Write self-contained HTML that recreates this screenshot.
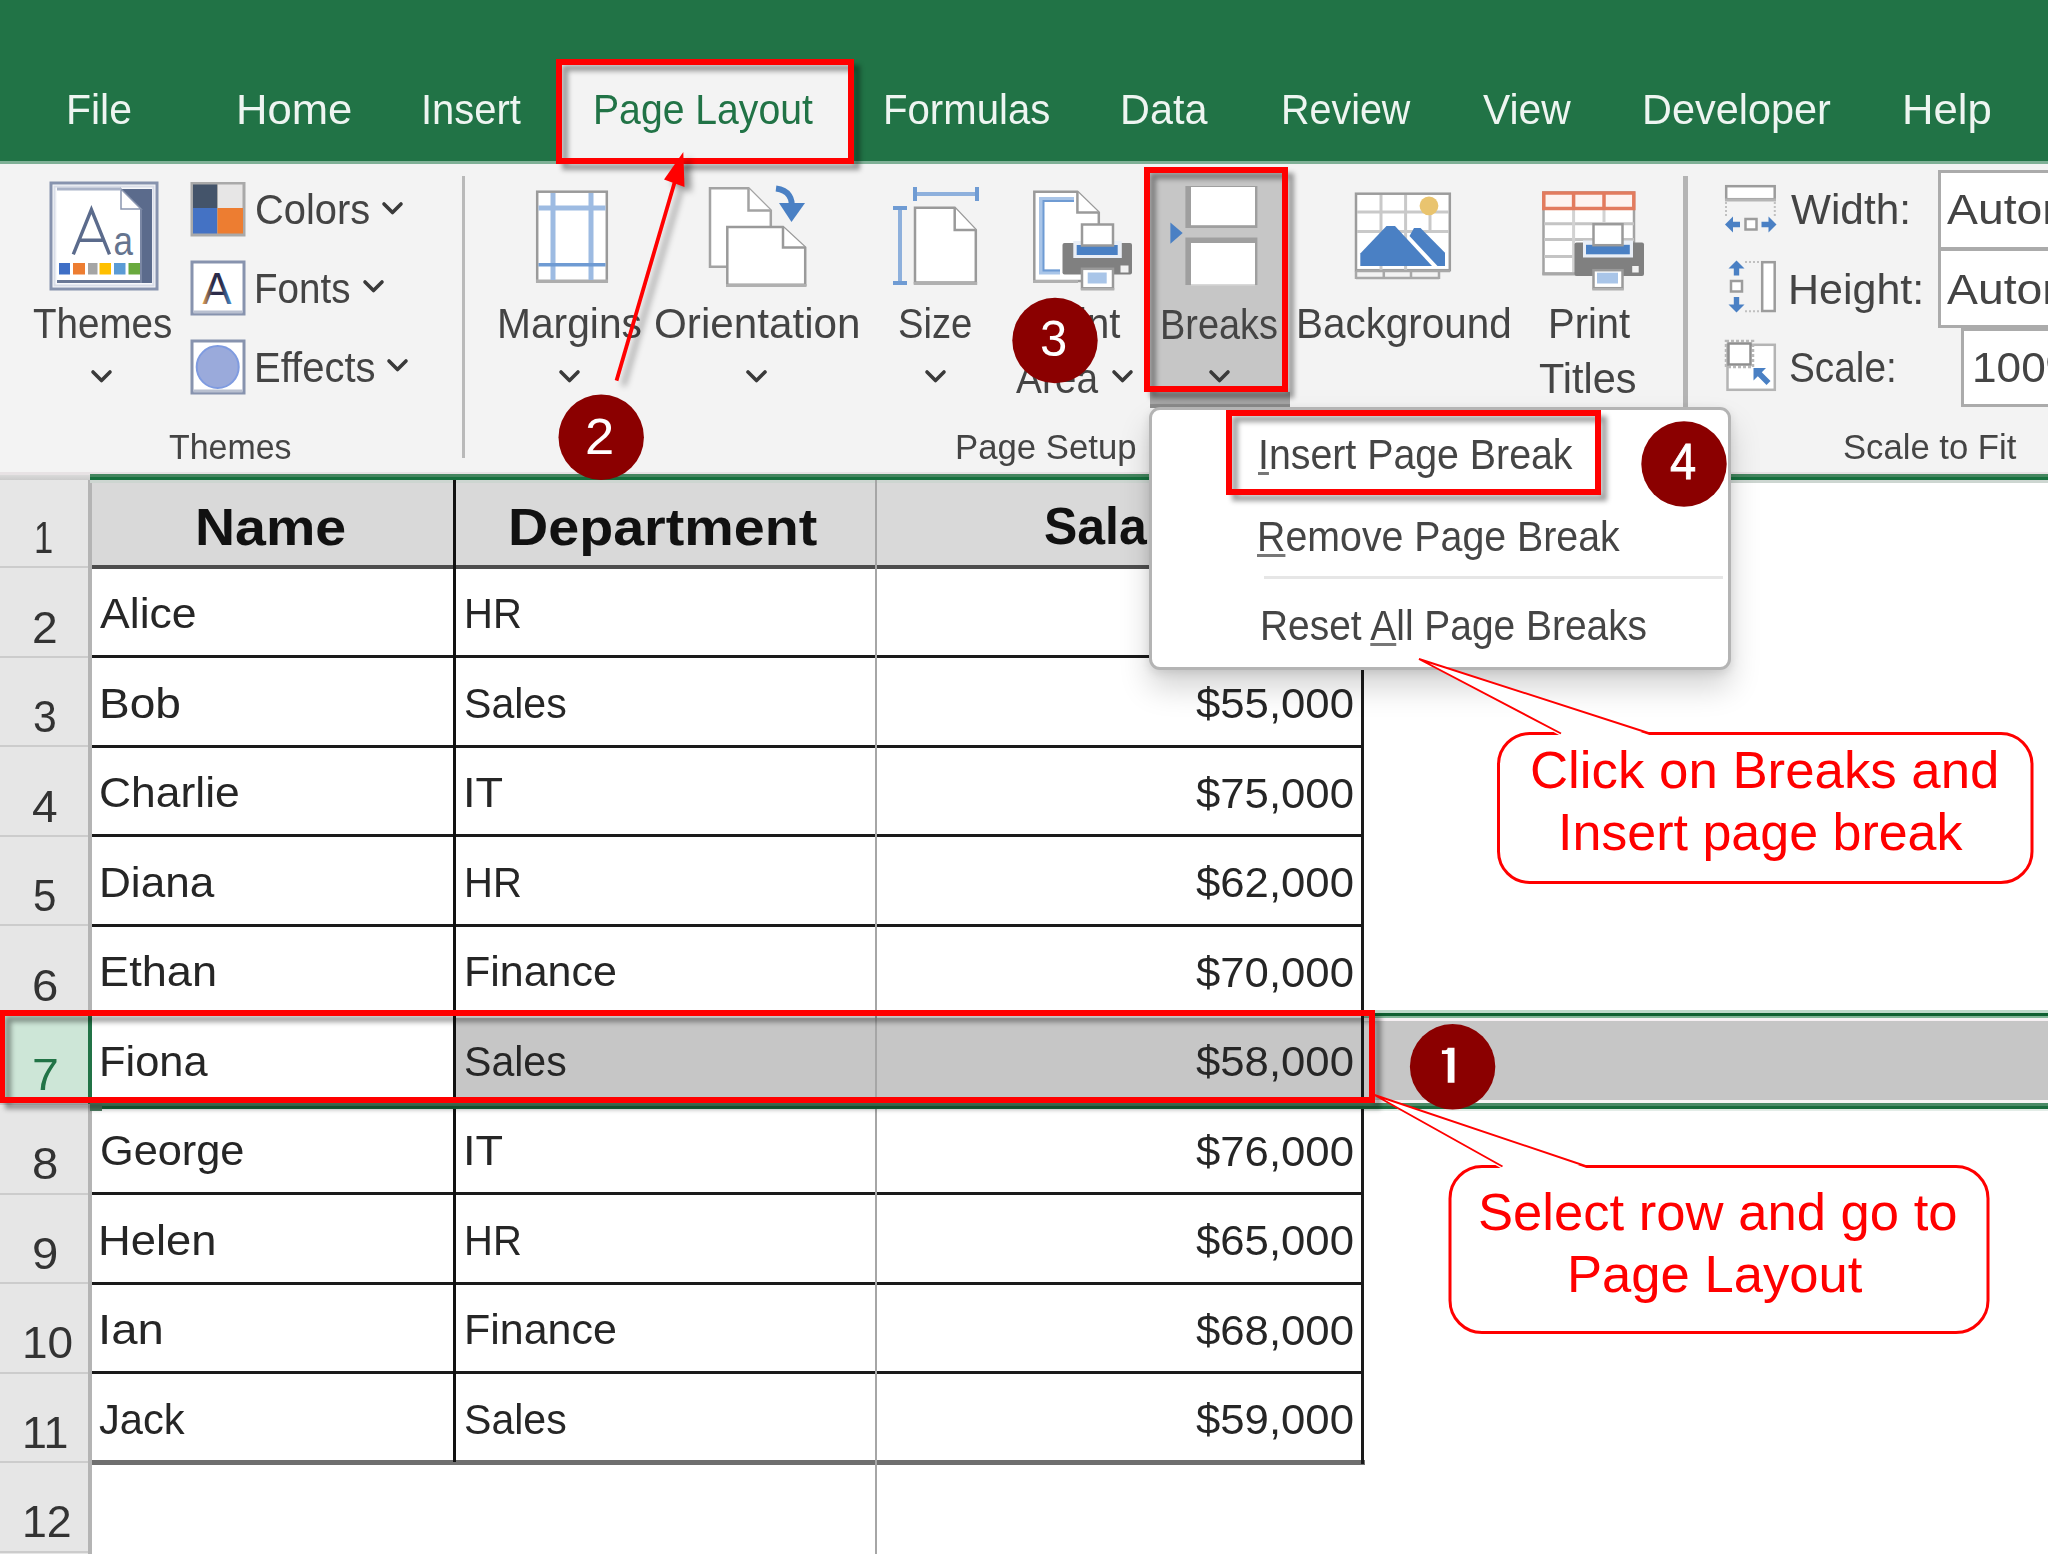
<!DOCTYPE html>
<html><head><meta charset="utf-8"><title>Excel Page Break</title>
<style>
html,body{margin:0;padding:0;width:2048px;height:1554px;overflow:hidden;background:#fff;}
#root{width:2048px;height:1554px;position:relative;overflow:hidden;background:#fff;
font-family:"Liberation Sans",sans-serif;}
.t{position:absolute;white-space:nowrap;transform-origin:0 50%;}
.r{position:absolute;}
svg{position:absolute;overflow:visible;}
.u{text-decoration:underline;text-decoration-thickness:3px;text-underline-offset:3px;text-decoration-color:#777;}
.rb{position:absolute;border:6px solid #ff0000;box-sizing:border-box;
filter:drop-shadow(6px 6px 2.5px rgba(0,0,0,.38));}
.circ{position:absolute;width:86px;height:86px;border-radius:50%;background:#8b0000;
color:#fff;text-align:center;font-size:47px;line-height:86px;}
</style></head><body><div id="root">

<div class="r" style="left:0px;top:0px;width:2048px;height:161px;background:#217346;"></div>
<div class="r" style="left:0px;top:161px;width:2048px;height:3px;background:#7fb096;"></div>
<div class="r" style="left:0px;top:164px;width:2048px;height:311px;background:#f3f3f3;"></div>
<div class="t " style="left:65.7px;top:89.0px;font-size:42.5px;line-height:42.5px;color:#eef5f1;transform:scaleX(0.9633);">File</div>
<div class="t " style="left:235.5px;top:89.0px;font-size:42.5px;line-height:42.5px;color:#eef5f1;transform:scaleX(1.0262);">Home</div>
<div class="t " style="left:421.4px;top:89.0px;font-size:42.5px;line-height:42.5px;color:#eef5f1;transform:scaleX(0.9392);">Insert</div>
<div class="t " style="left:882.8px;top:89.0px;font-size:42.5px;line-height:42.5px;color:#eef5f1;transform:scaleX(0.9444);">Formulas</div>
<div class="t " style="left:1119.7px;top:89.0px;font-size:42.5px;line-height:42.5px;color:#eef5f1;transform:scaleX(0.9736);">Data</div>
<div class="t " style="left:1280.6px;top:89.0px;font-size:42.5px;line-height:42.5px;color:#eef5f1;transform:scaleX(0.9283);">Review</div>
<div class="t " style="left:1482.8px;top:89.0px;font-size:42.5px;line-height:42.5px;color:#eef5f1;transform:scaleX(0.9598);">View</div>
<div class="t " style="left:1642.2px;top:89.0px;font-size:42.5px;line-height:42.5px;color:#eef5f1;transform:scaleX(0.9749);">Developer</div>
<div class="t " style="left:1902.0px;top:89.0px;font-size:42.5px;line-height:42.5px;color:#eef5f1;transform:scaleX(1.0275);">Help</div>
<div class="r" style="left:562px;top:65px;width:286px;height:99px;background:#f3f3f3;"></div>
<div class="t " style="left:592.9px;top:89.0px;font-size:42.5px;line-height:42.5px;color:#217346;transform:scaleX(0.9212);">Page Layout</div>
<div class="r" style="left:462px;top:176px;width:3px;height:282px;background:#b9b9b9;"></div>
<div class="r" style="left:1683px;top:176px;width:4.5px;height:232px;background:#b4b4b4;"></div>
<div class="t " style="left:33.2px;top:303.3px;font-size:42.5px;line-height:42.5px;color:#444444;transform:scaleX(0.9068);">Themes</div>
<div class="t " style="left:255.0px;top:189.0px;font-size:42.5px;line-height:42.5px;color:#444444;transform:scaleX(0.9378);">Colors</div>
<div class="t " style="left:253.9px;top:268.0px;font-size:42.5px;line-height:42.5px;color:#444444;transform:scaleX(0.9076);">Fonts</div>
<div class="t " style="left:253.8px;top:346.5px;font-size:42.5px;line-height:42.5px;color:#444444;transform:scaleX(0.9412);">Effects</div>
<div class="t " style="left:168.8px;top:429.0px;font-size:35px;line-height:35px;color:#444444;transform:scaleX(0.9685);">Themes</div>
<div class="t " style="left:496.5px;top:303.3px;font-size:42.5px;line-height:42.5px;color:#444444;transform:scaleX(0.9590);">Margins</div>
<div class="t " style="left:653.6px;top:303.3px;font-size:42.5px;line-height:42.5px;color:#444444;transform:scaleX(0.9933);">Orientation</div>
<div class="t " style="left:898.3px;top:303.3px;font-size:42.5px;line-height:42.5px;color:#444444;transform:scaleX(0.8982);">Size</div>
<div class="t " style="left:1037.8px;top:303.3px;font-size:42.5px;line-height:42.5px;color:#444444;transform:scaleX(0.9436);">Print</div>
<div class="t " style="left:1015.5px;top:358.4px;font-size:42.5px;line-height:42.5px;color:#444444;transform:scaleX(0.9144);">Area</div>
<div class="t " style="left:1295.8px;top:303.3px;font-size:42.5px;line-height:42.5px;color:#444444;transform:scaleX(0.9511);">Background</div>
<div class="t " style="left:1547.8px;top:303.3px;font-size:42.5px;line-height:42.5px;color:#444444;transform:scaleX(0.9400);">Print</div>
<div class="t " style="left:1539.0px;top:358.4px;font-size:42.5px;line-height:42.5px;color:#444444;transform:scaleX(0.9760);">Titles</div>
<div class="t " style="left:954.5px;top:429.0px;font-size:35px;line-height:35px;color:#444444;transform:scaleX(0.9923);">Page Setup</div>
<div class="t " style="left:1790.8px;top:189.0px;font-size:42.5px;line-height:42.5px;color:#444444;transform:scaleX(0.9961);">Width:</div>
<div class="t " style="left:1787.6px;top:268.5px;font-size:42.5px;line-height:42.5px;color:#444444;transform:scaleX(1.0118);">Height:</div>
<div class="t " style="left:1789.3px;top:347.3px;font-size:42.5px;line-height:42.5px;color:#444444;transform:scaleX(0.9118);">Scale:</div>
<div class="t " style="left:1843.4px;top:429.0px;font-size:35px;line-height:35px;color:#444444;transform:scaleX(0.9899);">Scale to Fit</div>
<div class="r" style="left:1938px;top:170px;width:140px;height:80px;background:#fff;border:3px solid #ababab;box-sizing:border-box;"></div>
<div class="r" style="left:1938px;top:248px;width:140px;height:80px;background:#fff;border:3px solid #ababab;box-sizing:border-box;"></div>
<div class="r" style="left:1961px;top:328px;width:140px;height:79px;background:#fff;border:3px solid #ababab;box-sizing:border-box;"></div>
<div class="t " style="left:1946.5px;top:189.0px;font-size:42.5px;line-height:42.5px;color:#444444;transform:scaleX(1.0900);">Automatic</div>
<div class="t " style="left:1946.5px;top:268.5px;font-size:42.5px;line-height:42.5px;color:#444444;transform:scaleX(1.0900);">Automatic</div>
<div class="t " style="left:1971.7px;top:347.3px;font-size:42.5px;line-height:42.5px;color:#444444;transform:scaleX(1.0400);">100%</div>
<svg style="left:91.5px;top:370.8px" width="19" height="10.5" viewBox="0 0 19 10.5"><path d="M1 1 L9.5 9.5 L18 1" fill="none" stroke="#3a3a3a" stroke-width="3.6" stroke-linecap="round" stroke-linejoin="round"/></svg>
<svg style="left:383.0px;top:203.1px" width="19" height="10.5" viewBox="0 0 19 10.5"><path d="M1 1 L9.5 9.5 L18 1" fill="none" stroke="#3a3a3a" stroke-width="3.6" stroke-linecap="round" stroke-linejoin="round"/></svg>
<svg style="left:363.5px;top:281.4px" width="19" height="10.5" viewBox="0 0 19 10.5"><path d="M1 1 L9.5 9.5 L18 1" fill="none" stroke="#3a3a3a" stroke-width="3.6" stroke-linecap="round" stroke-linejoin="round"/></svg>
<svg style="left:388.0px;top:360.2px" width="19" height="10.5" viewBox="0 0 19 10.5"><path d="M1 1 L9.5 9.5 L18 1" fill="none" stroke="#3a3a3a" stroke-width="3.6" stroke-linecap="round" stroke-linejoin="round"/></svg>
<svg style="left:559.5px;top:370.8px" width="19" height="10.5" viewBox="0 0 19 10.5"><path d="M1 1 L9.5 9.5 L18 1" fill="none" stroke="#3a3a3a" stroke-width="3.6" stroke-linecap="round" stroke-linejoin="round"/></svg>
<svg style="left:746.5px;top:370.8px" width="19" height="10.5" viewBox="0 0 19 10.5"><path d="M1 1 L9.5 9.5 L18 1" fill="none" stroke="#3a3a3a" stroke-width="3.6" stroke-linecap="round" stroke-linejoin="round"/></svg>
<svg style="left:925.5px;top:370.8px" width="19" height="10.5" viewBox="0 0 19 10.5"><path d="M1 1 L9.5 9.5 L18 1" fill="none" stroke="#3a3a3a" stroke-width="3.6" stroke-linecap="round" stroke-linejoin="round"/></svg>
<svg style="left:1112.5px;top:370.8px" width="19" height="10.5" viewBox="0 0 19 10.5"><path d="M1 1 L9.5 9.5 L18 1" fill="none" stroke="#3a3a3a" stroke-width="3.6" stroke-linecap="round" stroke-linejoin="round"/></svg>
<svg style="left:0;top:0" width="2048" height="480" viewBox="0 0 2048 480">
<defs>
<linearGradient id="gA" x1="0" y1="0" x2="1" y2="0">
<stop offset="0" stop-color="#e8a35a"/><stop offset="0.35" stop-color="#2b2b4a"/><stop offset="0.65" stop-color="#2b2b4a"/><stop offset="1" stop-color="#4a8fd0"/>
</linearGradient>
</defs>
<!-- ============ Themes big icon ============ -->
<rect x="51" y="183" width="106" height="106" fill="#f7f8fb" stroke="#8793ae" stroke-width="3"/>
<rect x="54.5" y="186.500" width="99" height="99" fill="none" stroke="#d9dde8" stroke-width="2"/>
<rect x="57" y="189" width="95" height="94" fill="#5b6b8c"/>
<path d="M57 189 H121 L141 209 V280 H57 Z" fill="#ffffff"/>
<path d="M121 189 V209 H141 Z" fill="#ffffff" stroke="#8a96b0" stroke-width="1.5"/>
<path d="M57 189 H121" stroke="#aab3c8" stroke-width="3"/>
<path d="M57 281.500 H141" stroke="#6a7896" stroke-width="3"/>
<path d="M141 209 V283" stroke="#7a87a4" stroke-width="2"/>
<path d="M73.300 254.400 L91.400 209.500 L109.500 254.400 M79.500 240.300 H103.300" fill="none" stroke="#5b6b8c" stroke-width="3.400" stroke-linejoin="miter"/>
<text x="113.500" y="254.500" font-family="Liberation Sans, sans-serif" font-size="41" fill="#65748f" textLength="19.500" lengthAdjust="spacingAndGlyphs">a</text>
<rect x="59" y="263" width="11" height="11.500" fill="#3f6fc6"/>
<rect x="73" y="263" width="12" height="11.500" fill="#ed7d31"/>
<rect x="88" y="263" width="9.500" height="11.500" fill="#a5a5a5"/>
<rect x="99.500" y="263" width="11.500" height="11.500" fill="#ffc000"/>
<rect x="114" y="263" width="11.500" height="11.500" fill="#5b9bd5"/>
<rect x="128.500" y="263" width="11.500" height="11.500" fill="#6aaa3e"/>

<!-- ============ Colors icon ============ -->
<rect x="190.500" y="182" width="55" height="54.500" fill="#a9a9a9"/>
<rect x="193" y="184.500" width="24" height="23.500" fill="#44546a"/>
<rect x="218" y="184.500" width="24.500" height="23.500" fill="#e7e6e6"/>
<rect x="193" y="208" width="24" height="25.500" fill="#4472c4"/>
<rect x="217.500" y="208" width="25.500" height="25.500" fill="#ed7d31"/>

<!-- ============ Fonts icon ============ -->
<rect x="192" y="262" width="52" height="52" fill="#ffffff" stroke="#8793ae" stroke-width="3"/>
<rect x="193.500" y="310.500" width="49" height="3" fill="#b9c0d0"/>
<text x="202.500" y="304" font-family="Liberation Sans, sans-serif" font-size="45" fill="url(#gA)" textLength="29" lengthAdjust="spacingAndGlyphs">A</text>

<!-- ============ Effects icon ============ -->
<rect x="192" y="341" width="52" height="52" fill="#ffffff" stroke="#8793ae" stroke-width="3"/>
<rect x="193.500" y="389.500" width="49" height="3" fill="#b9c0d0"/>
<circle cx="217.700" cy="367" r="21" fill="#9aaadb" stroke="#7f9be0" stroke-width="2"/>

<!-- ============ Margins icon ============ -->
<rect x="537.200" y="191.700" width="69.600" height="89.600" fill="#ffffff" stroke="#9a9a9a" stroke-width="2.500"/>
<rect x="536" y="279.500" width="72" height="3.500" fill="#adadad"/>
<rect x="550.500" y="193" width="5" height="87" fill="#9dbbe2"/>
<rect x="588.500" y="193" width="5" height="87" fill="#9dbbe2"/>
<rect x="538.500" y="205.500" width="67" height="5" fill="#9dbbe2"/>
<rect x="538.500" y="263" width="67" height="3.500" fill="#6f9bd3"/>

<!-- ============ Orientation icon ============ -->
<path d="M710 188.300 H748.500 L770.800 210.500 V266.800 H710 Z" fill="#ffffff" stroke="#a3a3a3" stroke-width="2.500"/>
<path d="M748.500 188.300 V210.500 H770.800" fill="#ffffff" stroke="#a3a3a3" stroke-width="2.500"/>
<path d="M727.300 227 H783 L805.200 247.500 V284.800 H727.300 Z" fill="#ffffff" stroke="#9a9a9a" stroke-width="2.500"/>
<path d="M783 227 V247.500 H805.200" fill="#ffffff" stroke="#9a9a9a" stroke-width="2.500"/>
<rect x="726" y="284" width="80.500" height="3" fill="#b0b0b0"/>
<path d="M776 188.500 C 789 190, 793 199, 791.500 209" fill="none" stroke="#4a80c4" stroke-width="6" stroke-linecap="butt"/>
<path d="M779 203 L791.500 222 L805 203 Z" fill="#4a80c4"/>

<!-- ============ Size icon ============ -->
<path d="M915 207.800 H954.700 L975.800 230 V282.500 H915 Z" fill="#ffffff" stroke="#9a9a9a" stroke-width="2.500"/>
<path d="M954.700 207.800 V230 H975.800" fill="#ffffff" stroke="#9a9a9a" stroke-width="2.500"/>
<rect x="913.700" y="282" width="63.500" height="3" fill="#b0b0b0"/>
<rect x="914" y="192" width="64" height="4" fill="#8eb0dc"/>
<rect x="913" y="187" width="4" height="14" fill="#6f9bd3"/>
<rect x="975" y="187" width="4" height="14" fill="#6f9bd3"/>
<rect x="898" y="207" width="4" height="77" fill="#8eb0dc"/>
<rect x="893" y="206" width="14" height="4" fill="#6f9bd3"/>
<rect x="893" y="281" width="14" height="4" fill="#6f9bd3"/>

<!-- ============ Print Area icon ============ -->
<path d="M1034.300 191.700 H1077.400 L1098.800 212.500 V281 H1034.300 Z" fill="#ffffff" stroke="#9a9a9a" stroke-width="2.500"/>
<path d="M1077.400 191.700 V212.500 H1098.800" fill="#ffffff" stroke="#9a9a9a" stroke-width="2.500"/>
<rect x="1033" y="280" width="45" height="3" fill="#b0b0b0"/>
<path d="M1074 199.500 H1041.500 V272 H1060" fill="none" stroke="#a9c5e8" stroke-width="5"/>
<path d="M1074 201 H1043.500 V270.500 H1060" fill="none" stroke="#6f9bd3" stroke-width="2"/>
<!-- printer -->
<rect x="1062.500" y="243" width="69.500" height="31.500" rx="2" fill="#808080"/>
<rect x="1073.300" y="241" width="48.500" height="17" fill="#e9eef6"/>
<rect x="1076.700" y="245" width="41" height="10" fill="#4a80c4"/>
<rect x="1082" y="224.500" width="31" height="21" fill="#ffffff" stroke="#9a9a9a" stroke-width="2.500"/>
<rect x="1120.500" y="265.500" width="8" height="7" fill="#f2f2f2"/>
<rect x="1082" y="268.800" width="31" height="19.500" fill="#ffffff" stroke="#9a9a9a" stroke-width="2.500"/>
<rect x="1080.800" y="288" width="33.500" height="2.500" fill="#b0b0b0"/>
<rect x="1087.700" y="272.500" width="19" height="11" fill="#a9c5e8"/>

<!-- ============ Background icon ============ -->
<rect x="1356" y="193.700" width="93.800" height="76.500" fill="#ffffff" stroke="#9c9c9c" stroke-width="2.500"/>
<path d="M1381 195 V270 M1405.600 195 V270 M1430 212 V232 M1357 212 H1449 M1357 231.600 H1449" stroke="#c9c9c9" stroke-width="3" fill="none"/>
<circle cx="1429" cy="205.800" r="9.400" fill="#e9c46f"/>
<path d="M1360.300 266 V253.400 L1386.500 226 H1395 L1432 266 Z" fill="#4a80c4"/>
<path d="M1409.500 236 L1414 228 H1420.500 L1445 252.700 V266 H1437.500 Z" fill="#4a80c4"/>
<path d="M1356 271 H1450 M1356 278 H1439.200 M1356 271 V279 M1383.800 271 V279 M1411 271 V279 M1439 271 V279" stroke="#a8a8a8" stroke-width="2.500" fill="none"/>

<!-- ============ Print Titles icon ============ -->
<rect x="1543.500" y="192.500" width="90.500" height="81" fill="#ffffff" stroke="#a3a3a3" stroke-width="2.500"/>
<path d="M1544 223.700 H1634 M1544 239.400 H1634 M1544 256.600 H1634" stroke="#c4c4c4" stroke-width="3" fill="none"/>
<path d="M1573.600 210 V272 M1604 210 V225" stroke="#d2d2d2" stroke-width="3" fill="none"/>
<rect x="1543.800" y="193" width="90" height="15.500" fill="#fdf3f0" stroke="#e27b5e" stroke-width="3.500"/>
<path d="M1573.600 193 V209 M1604 193 V209" stroke="#e27b5e" stroke-width="3.500" fill="none"/>
<rect x="1542.300" y="272.500" width="34" height="3" fill="#a8a8a8"/>
<!-- printer -->
<rect x="1574.500" y="242.500" width="69.500" height="33.500" rx="2" fill="#808080"/>
<rect x="1583" y="240.500" width="50" height="17" fill="#e9eef6"/>
<rect x="1586" y="244.800" width="43.800" height="9.500" fill="#4a80c4"/>
<rect x="1593.500" y="224.200" width="29" height="21" fill="#ffffff" stroke="#9a9a9a" stroke-width="2.500"/>
<rect x="1632.200" y="266" width="6.500" height="6.500" fill="#f2f2f2"/>
<rect x="1593.500" y="270.200" width="29" height="18" fill="#ffffff" stroke="#9a9a9a" stroke-width="2.500"/>
<rect x="1592.300" y="288" width="31.500" height="2.500" fill="#b0b0b0"/>
<rect x="1597" y="272.700" width="21" height="10.800" fill="#a9c5e8"/>

<!-- ============ Width icon ============ -->
<rect x="1726.200" y="186.200" width="48.500" height="13" fill="#ffffff" stroke="#9c9c9c" stroke-width="2.500"/>
<rect x="1725" y="198.500" width="51" height="3" fill="#b5b5b5"/>
<path d="M1726 202 V216 M1774.800 202 V216" stroke="#c0c0c0" stroke-width="2" stroke-dasharray="2 2" fill="none"/>
<path d="M1725 224.500 L1733 216.500 V221.800 H1740 V227.200 H1733 V232.500 Z" fill="#4a80c4"/>
<path d="M1776.500 224.500 L1768.500 216.500 V221.800 H1761.500 V227.200 H1768.500 V232.500 Z" fill="#4a80c4"/>
<rect x="1745.500" y="219" width="11" height="10.500" fill="#ffffff" stroke="#9c9c9c" stroke-width="2.500"/>

<!-- ============ Height icon ============ -->
<rect x="1762.200" y="262.200" width="12.500" height="48.800" fill="#ffffff" stroke="#9c9c9c" stroke-width="2.500"/>
<path d="M1745 262 H1761 M1745 311.300 H1761" stroke="#c0c0c0" stroke-width="2" stroke-dasharray="2 2" fill="none"/>
<path d="M1736.500 260.500 L1728.500 268.500 H1733.800 V275.500 H1739.200 V268.500 H1744.500 Z" fill="#4a80c4"/>
<path d="M1736.500 312.500 L1728.500 304.500 H1733.800 V297 H1739.200 V304.500 H1744.500 Z" fill="#4a80c4"/>
<rect x="1731" y="281" width="11" height="10.500" fill="#ffffff" stroke="#9c9c9c" stroke-width="2.500"/>

<!-- ============ Scale icon ============ -->
<rect x="1727.500" y="344.800" width="47.300" height="45" fill="#ffffff" stroke="#b4b4b4" stroke-width="2.500"/>
<rect x="1726" y="341" width="27" height="26" fill="none" stroke="#b8b8b8" stroke-width="2.500" stroke-dasharray="3 2"/>
<rect x="1728.500" y="343.500" width="22" height="21" fill="#ffffff" stroke="#8f8f8f" stroke-width="2.500"/>
<path d="M1753.500 368 H1766 L1761.800 372.200 L1770.500 381 L1766.500 385 L1757.800 376.200 L1753.500 380.500 Z" fill="#4a80c4"/>
</svg>

<div class="r" style="left:1150px;top:170px;width:137px;height:236px;background:#c6c6c6;"></div>
<div class="r" style="left:1150px;top:392px;width:140px;height:12.5px;background:#a6a6a6;"></div>
<div class="r" style="left:1150px;top:404px;width:140px;height:3.5px;background:#8c8c8c;"></div>
<div class="t " style="left:1159.5px;top:303.6px;font-size:42.5px;line-height:42.5px;color:#444444;transform:scaleX(0.8917);">Breaks</div>
<svg style="left:1209.5px;top:370.8px" width="19" height="10.5" viewBox="0 0 19 10.5"><path d="M1 1 L9.5 9.5 L18 1" fill="none" stroke="#3a3a3a" stroke-width="3.6" stroke-linecap="round" stroke-linejoin="round"/></svg>
<svg style="left:0;top:0" width="2048" height="480" viewBox="0 0 2048 480">
<rect x="1185.400" y="186" width="72" height="42" fill="#9f9f9f"/>
<rect x="1191" y="187" width="64" height="38.200" fill="#ffffff"/>
<rect x="1185.400" y="237.500" width="72" height="47.500" fill="#9f9f9f"/>
<rect x="1191" y="243" width="64" height="41" fill="#ffffff"/>
<rect x="1191" y="284" width="64" height="1.500" fill="#d9d9d9"/>
<path d="M1170.400 222.500 L1182.700 233 L1170.400 243.700 Z" fill="#4a80c4"/>
</svg>

<div class="r" style="left:0px;top:478px;width:88px;height:1076px;background:#e6e6e6;"></div>
<div class="r" style="left:0px;top:472px;width:90px;height:8px;background:#d4d4d4;background:linear-gradient(#e2e2e2,#cbcbcb);"></div>
<div class="r" style="left:88px;top:480px;width:4px;height:1074px;background:#b4b4b4;"></div>
<div class="r" style="left:0px;top:471.5px;width:2048px;height:3px;background:#e7e2e4;"></div>
<div class="r" style="left:90px;top:474.2px;width:1958px;height:3px;background:#44865f;"></div>
<div class="r" style="left:90px;top:477px;width:1958px;height:3px;background:#17703e;"></div>
<div class="r" style="left:90px;top:480px;width:1958px;height:2.5px;background:#cdd6d1;"></div>
<div class="r" style="left:92px;top:482.5px;width:1271px;height:83.5px;background:#d9d9d9;"></div>
<div class="r" style="left:456px;top:1018px;width:908px;height:84px;background:#c6c6c6;"></div>
<div class="r" style="left:1364px;top:1021px;width:684px;height:79px;background:#c6c6c6;"></div>
<div class="r" style="left:0px;top:566px;width:88px;height:2px;background:#cccccc;"></div>
<div class="r" style="left:0px;top:655.5px;width:88px;height:2px;background:#cccccc;"></div>
<div class="r" style="left:0px;top:745px;width:88px;height:2px;background:#cccccc;"></div>
<div class="r" style="left:0px;top:834.5px;width:88px;height:2px;background:#cccccc;"></div>
<div class="r" style="left:0px;top:924px;width:88px;height:2px;background:#cccccc;"></div>
<div class="r" style="left:0px;top:1013.5px;width:88px;height:2px;background:#cccccc;"></div>
<div class="r" style="left:0px;top:1103px;width:88px;height:2px;background:#cccccc;"></div>
<div class="r" style="left:0px;top:1192.5px;width:88px;height:2px;background:#cccccc;"></div>
<div class="r" style="left:0px;top:1282px;width:88px;height:2px;background:#cccccc;"></div>
<div class="r" style="left:0px;top:1371.5px;width:88px;height:2px;background:#cccccc;"></div>
<div class="r" style="left:0px;top:1461px;width:88px;height:2px;background:#cccccc;"></div>
<div class="r" style="left:0px;top:1550.5px;width:88px;height:2px;background:#cccccc;"></div>
<div class="r" style="left:0px;top:1016px;width:88px;height:86px;background:#cde6d7;"></div>
<div class="r" style="left:92px;top:565px;width:1272px;height:4px;background:#4d4d4d;"></div>
<div class="r" style="left:92px;top:655.0px;width:1272px;height:3px;background:#1a1a1a;"></div>
<div class="r" style="left:92px;top:744.5px;width:1272px;height:3px;background:#1a1a1a;"></div>
<div class="r" style="left:92px;top:834.0px;width:1272px;height:3px;background:#1a1a1a;"></div>
<div class="r" style="left:92px;top:923.5px;width:1272px;height:3px;background:#1a1a1a;"></div>
<div class="r" style="left:92px;top:1013.0px;width:1272px;height:3px;background:#1a1a1a;"></div>
<div class="r" style="left:92px;top:1102.5px;width:1272px;height:3px;background:#1a1a1a;"></div>
<div class="r" style="left:92px;top:1192.0px;width:1272px;height:3px;background:#1a1a1a;"></div>
<div class="r" style="left:92px;top:1281.5px;width:1272px;height:3px;background:#1a1a1a;"></div>
<div class="r" style="left:92px;top:1371.0px;width:1272px;height:3px;background:#1a1a1a;"></div>
<div class="r" style="left:92px;top:1460px;width:1273px;height:5px;background:#6f6f6f;"></div>
<div class="r" style="left:453px;top:480px;width:3px;height:982px;background:#111;"></div>
<div class="r" style="left:875px;top:480px;width:2px;height:1074px;background:#a6a6a6;"></div>
<div class="r" style="left:1361px;top:480px;width:3px;height:984px;background:#1a1a1a;"></div>
<div class="r" style="left:1364px;top:1010px;width:684px;height:2.5px;background:#bcd8c9;"></div>
<div class="r" style="left:1364px;top:1012.5px;width:684px;height:3px;background:#0f5f31;"></div>
<div class="r" style="left:1364px;top:1015.5px;width:684px;height:2.5px;background:#80b597;"></div>
<div class="r" style="left:1364px;top:1018px;width:684px;height:3px;background:#f6f0f3;"></div>
<div class="r" style="left:1364px;top:1100px;width:684px;height:3px;background:#f6f3f4;"></div>
<div class="r" style="left:90px;top:1103px;width:1958px;height:2.5px;background:#4a8a66;"></div>
<div class="r" style="left:90px;top:1105.5px;width:1958px;height:3.5px;background:#1a6b3e;"></div>
<div class="r" style="left:1364px;top:1109px;width:684px;height:2px;background:#e3ece7;"></div>
<div class="r" style="left:88px;top:1016px;width:4px;height:88px;background:#217346;"></div>
<div class="r" style="left:90px;top:1103px;width:12px;height:8px;background:#4f7f64;"></div>
<div class="t " style="left:195.4px;top:501.0px;font-size:52px;line-height:52px;color:#111;font-weight:bold;transform:scaleX(1.0676);">Name</div>
<div class="t " style="left:508.4px;top:500.5px;font-size:52px;line-height:52px;color:#111;font-weight:bold;transform:scaleX(1.0703);">Department</div>
<div class="t " style="left:1043.5px;top:500.0px;font-size:52px;line-height:52px;color:#111;font-weight:bold;transform:scaleX(0.9599);">Salary</div>
<div class="t " style="left:100.3px;top:593.4px;font-size:42px;line-height:42px;color:#262626;transform:scaleX(1.0611);">Alice</div>
<div class="t " style="left:464.2px;top:593.4px;font-size:42px;line-height:42px;color:#262626;transform:scaleX(0.9524);">HR</div>
<div class="t " style="left:1195.6px;top:593.9px;font-size:42px;line-height:42px;color:#262626;transform:scaleX(1.0404);">$60,000</div>
<div class="t " style="left:98.5px;top:682.9px;font-size:42px;line-height:42px;color:#262626;transform:scaleX(1.0958);">Bob</div>
<div class="t " style="left:463.8px;top:682.9px;font-size:42px;line-height:42px;color:#262626;transform:scaleX(0.9780);">Sales</div>
<div class="t " style="left:1195.6px;top:683.4px;font-size:42px;line-height:42px;color:#262626;transform:scaleX(1.0404);">$55,000</div>
<div class="t " style="left:99.2px;top:772.4px;font-size:42px;line-height:42px;color:#262626;transform:scaleX(1.0577);">Charlie</div>
<div class="t " style="left:463.3px;top:772.4px;font-size:42px;line-height:42px;color:#262626;transform:scaleX(1.0745);">IT</div>
<div class="t " style="left:1195.6px;top:772.9px;font-size:42px;line-height:42px;color:#262626;transform:scaleX(1.0404);">$75,000</div>
<div class="t " style="left:98.7px;top:861.9px;font-size:42px;line-height:42px;color:#262626;transform:scaleX(1.0503);">Diana</div>
<div class="t " style="left:464.2px;top:861.9px;font-size:42px;line-height:42px;color:#262626;transform:scaleX(0.9524);">HR</div>
<div class="t " style="left:1195.6px;top:862.4px;font-size:42px;line-height:42px;color:#262626;transform:scaleX(1.0404);">$62,000</div>
<div class="t " style="left:98.6px;top:951.4px;font-size:42px;line-height:42px;color:#262626;transform:scaleX(1.0758);">Ethan</div>
<div class="t " style="left:464.0px;top:951.4px;font-size:42px;line-height:42px;color:#262626;transform:scaleX(1.0231);">Finance</div>
<div class="t " style="left:1195.6px;top:951.9px;font-size:42px;line-height:42px;color:#262626;transform:scaleX(1.0404);">$70,000</div>
<div class="t " style="left:99.0px;top:1040.9px;font-size:42px;line-height:42px;color:#262626;transform:scaleX(1.0331);">Fiona</div>
<div class="t " style="left:463.8px;top:1040.9px;font-size:42px;line-height:42px;color:#262626;transform:scaleX(0.9780);">Sales</div>
<div class="t " style="left:1195.6px;top:1041.4px;font-size:42px;line-height:42px;color:#262626;transform:scaleX(1.0404);">$58,000</div>
<div class="t " style="left:100.3px;top:1130.4px;font-size:42px;line-height:42px;color:#262626;transform:scaleX(1.0309);">George</div>
<div class="t " style="left:463.3px;top:1130.4px;font-size:42px;line-height:42px;color:#262626;transform:scaleX(1.0745);">IT</div>
<div class="t " style="left:1195.6px;top:1130.9px;font-size:42px;line-height:42px;color:#262626;transform:scaleX(1.0404);">$76,000</div>
<div class="t " style="left:98.4px;top:1219.9px;font-size:42px;line-height:42px;color:#262626;transform:scaleX(1.0796);">Helen</div>
<div class="t " style="left:464.2px;top:1219.9px;font-size:42px;line-height:42px;color:#262626;transform:scaleX(0.9524);">HR</div>
<div class="t " style="left:1195.6px;top:1220.4px;font-size:42px;line-height:42px;color:#262626;transform:scaleX(1.0404);">$65,000</div>
<div class="t " style="left:98.0px;top:1309.4px;font-size:42px;line-height:42px;color:#262626;transform:scaleX(1.1271);">Ian</div>
<div class="t " style="left:464.0px;top:1309.4px;font-size:42px;line-height:42px;color:#262626;transform:scaleX(1.0231);">Finance</div>
<div class="t " style="left:1195.6px;top:1309.9px;font-size:42px;line-height:42px;color:#262626;transform:scaleX(1.0404);">$68,000</div>
<div class="t " style="left:99.4px;top:1398.9px;font-size:42px;line-height:42px;color:#262626;transform:scaleX(0.9921);">Jack</div>
<div class="t " style="left:463.8px;top:1398.9px;font-size:42px;line-height:42px;color:#262626;transform:scaleX(0.9780);">Sales</div>
<div class="t " style="left:1195.6px;top:1399.4px;font-size:42px;line-height:42px;color:#262626;transform:scaleX(1.0404);">$59,000</div>
<div class="t " style="left:33.9px;top:516.3px;font-size:44px;line-height:44px;color:#333;transform:scaleX(0.7837);">1</div>
<div class="t " style="left:31.7px;top:605.7px;font-size:44px;line-height:44px;color:#333;transform:scaleX(1.0490);">2</div>
<div class="t " style="left:33.0px;top:695.2px;font-size:44px;line-height:44px;color:#333;transform:scaleX(0.9706);">3</div>
<div class="t " style="left:32.1px;top:784.6px;font-size:44px;line-height:44px;color:#333;transform:scaleX(1.0472);">4</div>
<div class="t " style="left:33.3px;top:874.1px;font-size:44px;line-height:44px;color:#333;transform:scaleX(0.9569);">5</div>
<div class="t " style="left:31.6px;top:963.5px;font-size:44px;line-height:44px;color:#333;transform:scaleX(1.0753);">6</div>
<div class="t " style="left:31.6px;top:1053.0px;font-size:44px;line-height:44px;color:#217346;transform:scaleX(1.0989);">7</div>
<div class="t " style="left:31.6px;top:1142.4px;font-size:44px;line-height:44px;color:#333;transform:scaleX(1.0766);">8</div>
<div class="t " style="left:31.9px;top:1231.9px;font-size:44px;line-height:44px;color:#333;transform:scaleX(1.0753);">9</div>
<div class="t " style="left:21.6px;top:1321.3px;font-size:44px;line-height:44px;color:#333;transform:scaleX(1.0455);">10</div>
<div class="t " style="left:21.6px;top:1410.8px;font-size:44px;line-height:44px;color:#333;transform:scaleX(1.0184);">11</div>
<div class="t " style="left:21.6px;top:1500.2px;font-size:44px;line-height:44px;color:#333;transform:scaleX(1.0152);">12</div>
<!-- dropdown menu -->
<div class="r" style="left:1148.500px;top:407.200px;width:582px;height:262.800px;background:#fff;border:3px solid #b4b4b4;border-radius:11px;box-sizing:border-box;box-shadow:0 18px 30px rgba(0,0,0,.17), 0 3px 10px rgba(0,0,0,.10);"></div>
<div class="r" style="left:1264px;top:575.500px;width:459px;height:3px;background:#e6e6e6;"></div>
<div class="t " style="left:1257.5px;top:434.0px;font-size:42.5px;line-height:42.5px;color:#454545;transform:scaleX(0.9245);"><span class="u">I</span>nsert Page Break</div>
<div class="t " style="left:1257.4px;top:515.6px;font-size:42.5px;line-height:42.5px;color:#454545;transform:scaleX(0.9250);"><span class="u">R</span>emove Page Break</div>
<div class="t " style="left:1259.9px;top:605.0px;font-size:42.5px;line-height:42.5px;color:#454545;transform:scaleX(0.9153);">Reset <span class="u">A</span>ll Page Breaks</div>
<!-- red boxes -->
<div class="rb" style="left:556px;top:59px;width:298px;height:105px;"></div>
<div class="rb" style="left:1144px;top:167px;width:143.500px;height:225px;"></div>
<div class="rb" style="left:1226px;top:410px;width:374.500px;height:84.500px;"></div>
<div class="rb" style="left:-1px;top:1010px;width:1375.500px;height:93px;"></div>
<!-- arrow -->
<svg style="left:0;top:0;filter:drop-shadow(7px 5px 3px rgba(0,0,0,.38));" width="2048" height="480" viewBox="0 0 2048 480">
<path d="M616.500 380.600 L675 181" stroke="#ff0000" stroke-width="3.800" fill="none"/>
<path d="M683.300 152 L684.500 187 L664 179.400 Z" fill="#ff0000"/>
</svg>
<!-- callouts -->
<svg style="left:0;top:0" width="2048" height="1554" viewBox="0 0 2048 1554">
<path d="M1529.500 733.500 H2001 A31 31 0 0 1 2032 764.500 V851.500 A31 31 0 0 1 2001 882.500 H1529.500 A31 31 0 0 1 1498.500 851.500 V764.500 A31 31 0 0 1 1529.500 733.500 Z" fill="#ffffff" stroke="#ff0000" stroke-width="3"/>
<path d="M1560 735.500 L1419 659 L1651 735.500 Z" fill="#ffffff"/>
<path d="M1561 733.500 L1419 659 L1650 733.500" fill="none" stroke="#ff0000" stroke-width="1.900" stroke-linejoin="miter"/>
<path d="M1482 1166.500 H1956 A32 32 0 0 1 1988 1198.500 V1300.500 A32 32 0 0 1 1956 1332.500 H1482 A32 32 0 0 1 1450 1300.500 V1198.500 A32 32 0 0 1 1482 1166.500 Z" fill="#ffffff" stroke="#ff0000" stroke-width="3"/>
<path d="M1501.500 1168.500 L1374.500 1095 L1588 1168.500 Z" fill="#ffffff"/>
<path d="M1502.500 1166.500 L1374.500 1095 L1587 1166.500" fill="none" stroke="#ff0000" stroke-width="1.900" stroke-linejoin="miter"/>
</svg>
<div class="t " style="left:1530.4px;top:745.3px;font-size:51.6px;line-height:51.6px;color:#ff0000;transform:scaleX(1.0231);">Click on Breaks and</div>
<div class="t " style="left:1558.3px;top:806.8px;font-size:51.6px;line-height:51.6px;color:#ff0000;transform:scaleX(1.0074);">Insert page break</div>
<div class="t " style="left:1477.6px;top:1187.3px;font-size:51.6px;line-height:51.6px;color:#ff0000;transform:scaleX(1.0194);">Select row and go to</div>
<div class="t " style="left:1567.4px;top:1249.3px;font-size:51.6px;line-height:51.6px;color:#ff0000;transform:scaleX(1.0198);">Page Layout</div>
<!-- circles -->
<svg style="left:0;top:0" width="2048" height="1554" viewBox="0 0 2048 1554">
<circle cx="1452.600" cy="1066.700" r="42.700" fill="#8b0000"/>
<circle cx="601.200" cy="437.300" r="42.700" fill="#8b0000"/>
<circle cx="1055" cy="340.500" r="42.700" fill="#8b0000"/>
<circle cx="1684" cy="464" r="42.700" fill="#8b0000"/>
<path d="M1447.700 1047.700 H1454.500 V1082.800 H1447.700 V1054 H1441.900 V1050.300 H1445.500 Q1447.700 1049.800 1447.700 1047.700 Z" fill="#ffffff"/>
</svg>
<div class="t " style="left:585.3px;top:411.8px;font-size:49.5px;line-height:49.5px;color:#fff;transform:scaleX(1.0612);">2</div>
<div class="t " style="left:1040.3px;top:314.1px;font-size:49.5px;line-height:49.5px;color:#fff;transform:scaleX(0.9891);">3</div>
<div class="t " style="left:1669.6px;top:437.1px;font-size:49.5px;line-height:49.5px;color:#fff;transform:scaleX(0.9507);-webkit-text-stroke:0.8px #fff;">4</div>

</div></body></html>
